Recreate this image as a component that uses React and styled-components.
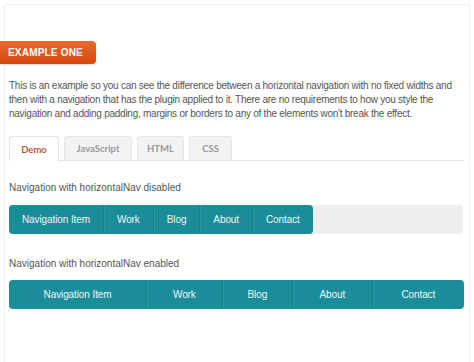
import React from 'react';
import styled, { createGlobalStyle } from 'styled-components';

const GlobalStyle = createGlobalStyle`
  body {
    margin: 0;
    background: #fff;
    font-family: "Liberation Sans", Arial, sans-serif;
  }
`;

const Frame = styled.div`
  margin: 4px 4px 0 4px;
  min-height: 358px;
  box-sizing: border-box;
  border: 1px solid #f0f0f0;
  border-bottom: none;
  padding: 36px 4px 0 4px;
`;

const Badge = styled.div`
  margin-left: -9px;
  width: 96px;
  height: 23px;
  box-sizing: border-box;
  padding-left: 8px;
  display: flex;
  align-items: center;
  background: linear-gradient(#ea6a2e, #d2480f);
  border-radius: 0 4px 4px 0;
  box-shadow: 0 1px 2px rgba(0, 0, 0, 0.15);
  color: #fff;
  font-size: 10px;
  font-weight: bold;
  letter-spacing: 0.2px;
`;

const Intro = styled.p`
  margin: 15px 0 0;
  font-size: 10px;
  line-height: 14px;
  color: #555;
  white-space: nowrap;
  letter-spacing: -0.25px;
`;

const TabRow = styled.div`
  margin-top: 15px;
  display: flex;
  gap: 5px;
  height: 24px;
  border-bottom: 1px solid #e6e6e6;
`;

const Tab = styled.div`
  width: ${p => p.$w}px;
  box-sizing: border-box;
  height: ${p => (p.$active ? 25 : 24)}px;
  display: flex;
  align-items: center;
  justify-content: center;
  border: 1px solid ${p => (p.$active ? '#e2e2e2' : '#e6e6e6')};
  border-bottom: none;
  border-radius: 3px 3px 0 0;
  background: ${p => (p.$active ? '#fff' : '#f3f3f3')};
  color: ${p => (p.$active ? '#b9583c' : '#999')};
  font-family: Lato, "Liberation Sans", sans-serif;
  font-weight: bold;
  font-size: 9.5px;
`;

const Label = styled.div`
  margin-top: ${p => p.$top}px;
  font-size: 10px;
  line-height: 14px;
  color: #555;
`;

const Track = styled.div`
  margin: 10px 2px 0 0;
  height: 29px;
  background: #eee;
  border-radius: 4px;
  display: flex;
`;

const Nav = styled.ul`
  margin: ${p => p.$top || 0}px ${p => p.$right || 0}px 0 0;
  padding: 0;
  list-style: none;
  height: 29px;
  display: flex;
  background: #1a8d98;
  border-radius: 4px;
  overflow: hidden;
  flex: ${p => (p.$fill ? '1' : '0 0 auto')};
`;

const NavItem = styled.li`
  display: flex;
  align-items: center;
  justify-content: center;
  padding: 0 13px;
  color: #eaf7f8;
  font-size: 10px;
  letter-spacing: -0.1px;
  white-space: nowrap;
  border-left: 1px solid #177e88;
  box-shadow: inset 1px 0 0 #2a98a2;
  &:first-child {
    border-left: none;
    box-shadow: none;
  }
  ${p => p.$grow && `flex: ${p.$grow} 1 0; padding: 0;`}
`;

const items = [
  { name: 'Navigation Item', grow: 138 },
  { name: 'Work', grow: 75 },
  { name: 'Blog', grow: 70 },
  { name: 'About', grow: 79 },
  { name: 'Contact', grow: 92 },
];

const tabs = [
  { name: 'Demo', w: 50 },
  { name: 'JavaScript', w: 68 },
  { name: 'HTML', w: 47 },
  { name: 'CSS', w: 43 },
];

export default function App() {
  return (
    <>
      <GlobalStyle />
      <Frame>
        <Badge>EXAMPLE ONE</Badge>
        <Intro>
          This is an example so you can see the difference between a horizontal navigation with no fixed widths and
          <br />
          then with a navigation that has the plugin applied to it. There are no requirements to how you style the
          <br />
          navigation and adding padding, margins or borders to any of the elements won't break the effect.
        </Intro>
        <TabRow>
          {tabs.map((t, i) => (
            <Tab key={t.name} $w={t.w} $active={i === 0}>{t.name}</Tab>
          ))}
        </TabRow>

        <Label $top={20}>Navigation with horizontalNav disabled</Label>
        <Track>
          <Nav>
            {items.map(it => (
              <NavItem key={it.name}>{it.name}</NavItem>
            ))}
          </Nav>
        </Track>

        <Label $top={23}>Navigation with horizontalNav enabled</Label>
        <Nav $fill $top={9} $right={1}>
          {items.map(it => (
            <NavItem key={it.name} $grow={it.grow}>{it.name}</NavItem>
          ))}
        </Nav>
      </Frame>
    </>
  );
}
